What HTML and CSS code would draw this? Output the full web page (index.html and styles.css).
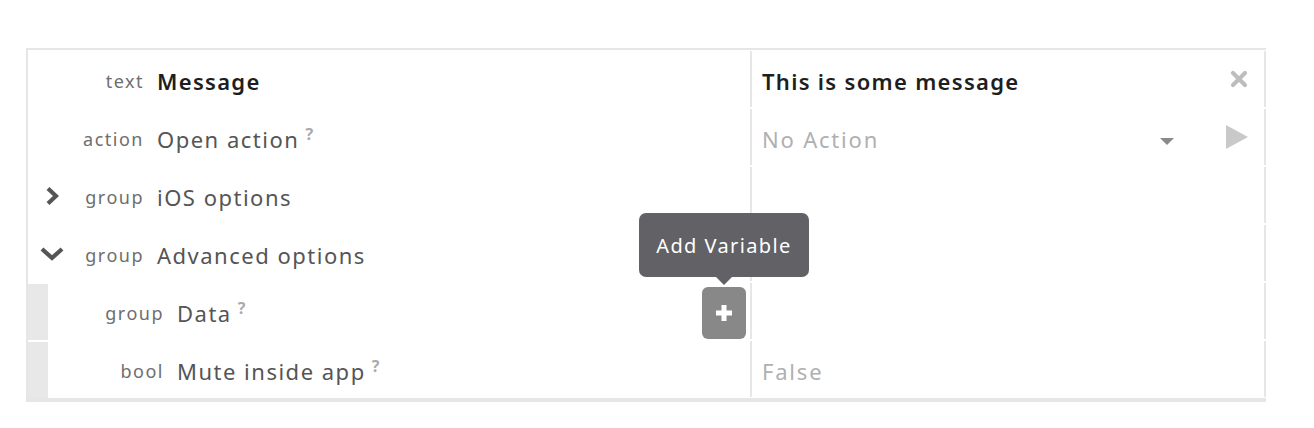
FILE: index.html
```html
<!DOCTYPE html>
<html>
<head>
<meta charset="utf-8">
<link rel="stylesheet" href="styles.css">
</head>
<body>
<div class="table">
  <div class="row">
    <div class="left">
      <div class="chev"></div>
      <div class="type">text</div>
      <div class="name strong">Message</div>
    </div>
    <div class="right">
      <div class="value strong">This is some message</div>
      <svg class="xicon" width="18" height="18" viewBox="0 0 18 18"><path d="M3 3L15 15M15 3L3 15" stroke="#bdbdbd" stroke-width="4.2" stroke-linecap="round"/></svg>
    </div>
  </div>
  <div class="row">
    <div class="left">
      <div class="chev"></div>
      <div class="type">action</div>
      <div class="name">Open action<sup class="q">?</sup></div>
    </div>
    <div class="right">
      <div class="value muted">No Action</div>
      <svg class="caret" width="14" height="8" viewBox="0 0 14 8"><path d="M0 0H14L7 7Z" fill="#8a8a8a"/></svg>
      <svg class="play" width="22" height="24" viewBox="0 0 22 24"><path d="M0 0L22 12L0 24Z" fill="#c9c9c9"/></svg>
    </div>
  </div>
  <div class="row">
    <div class="left">
      <div class="chev"><svg width="14" height="20" viewBox="0 0 14 20"><path d="M3 2.5L11 10L3 17.5" fill="none" stroke="#555" stroke-width="4.2"/></svg></div>
      <div class="type">group</div>
      <div class="name">iOS options</div>
    </div>
    <div class="right"></div>
  </div>
  <div class="row">
    <div class="left">
      <div class="chev"><svg width="24" height="16" viewBox="0 0 24 16"><path d="M2 3L12 12L22 3" fill="none" stroke="#555" stroke-width="4.2"/></svg></div>
      <div class="type">group</div>
      <div class="name">Advanced options</div>
    </div>
    <div class="right"></div>
  </div>
  <div class="row">
    <div class="left">
      <div class="indent"></div>
      <div class="chev"></div>
      <div class="type">group</div>
      <div class="name">Data<sup class="q">?</sup></div>
      <div class="addwrap">
        <div class="tooltip">Add Variable</div>
        <div class="addbtn"><svg width="20" height="20" viewBox="0 0 20 20"><path d="M10 2V18M2 10H18" stroke="#fff" stroke-width="5"/></svg></div>
      </div>
    </div>
    <div class="right"></div>
  </div>
  <div class="row">
    <div class="left">
      <div class="indent"></div>
      <div class="chev"></div>
      <div class="type">bool</div>
      <div class="name">Mute inside app<sup class="q">?</sup></div>
    </div>
    <div class="right">
      <div class="value muted">False</div>
    </div>
  </div>
</div>
</body>
</html>
```

FILE: styles.css
```css
* { box-sizing: border-box; }
body {
  margin: 0;
  background: #fff;
  font-family: "Noto Sans", Lato, sans-serif;
}
.table {
  margin: 48px 0 0 26px;
  width: 1240px;
  border-top: 2px solid #e6e6e6;
  border-left: 2px solid #e6e6e6;
  border-bottom: 4px solid #e6e6e6;
}
.row {
  display: flex;
  height: 58px;
}
.left {
  width: 722px;
  display: flex;
  align-items: center;
  position: relative;
}
.indent {
  width: 20px;
  align-self: stretch;
  background: #e8e8e8;
  margin: 2px 0 0 0;
}
.chev {
  width: 40px;
  display: flex;
  justify-content: center;
  padding-left: 8px;
  padding-top: 2px;
}
.type {
  width: 76px;
  text-align: right;
  font-size: 18px;
  color: #6e6e6e;
  letter-spacing: 1.5px;
  margin-top: 3px;
}
.name {
  margin-left: 13px;
  margin-top: 3px;
  font-size: 22px;
  color: #555;
  letter-spacing: 1.5px;
}
.strong {
  font-weight: 600;
  color: #1e1e1e;
  letter-spacing: 1.3px;
}
.q {
  font-size: 16px;
  font-weight: 700;
  color: #aaa;
  margin-left: 6px;
  vertical-align: 8px;
  letter-spacing: 0;
}
.right {
  flex: 1;
  margin: 1px 0;
  border-left: 2px solid #e6e6e6;
  border-right: 2px solid #e6e6e6;
  display: flex;
  align-items: center;
  padding: 0 16px 0 10px;
}
.value {
  flex: 1;
  font-size: 22px;
  margin-top: 3px;
}
.muted {
  color: #b0b0b0;
  letter-spacing: 1.8px;
}
.caret { margin-right: 52px; margin-top: 10px; }
.addwrap {
  margin-left: auto;
  margin-right: 4px;
  position: relative;
}
.addbtn {
  width: 44px;
  height: 52px;
  background: #888;
  border-radius: 6px;
  display: flex;
  align-items: center;
  justify-content: center;
  margin-top: 4px;
}
.tooltip {
  position: absolute;
  bottom: 62px;
  left: 50%;
  transform: translateX(-50%);
  width: 170px;
  height: 64px;
  background: #616166;
  color: #fff;
  border-radius: 7px;
  font-size: 20px;
  letter-spacing: 1.4px;
  display: flex;
  align-items: center;
  justify-content: center;
  white-space: nowrap;
}
.tooltip::after {
  content: "";
  position: absolute;
  top: 100%;
  left: 50%;
  margin-left: -8px;
  border: 8px solid transparent;
  border-top-color: #616166;
  border-bottom: 0;
}
```
